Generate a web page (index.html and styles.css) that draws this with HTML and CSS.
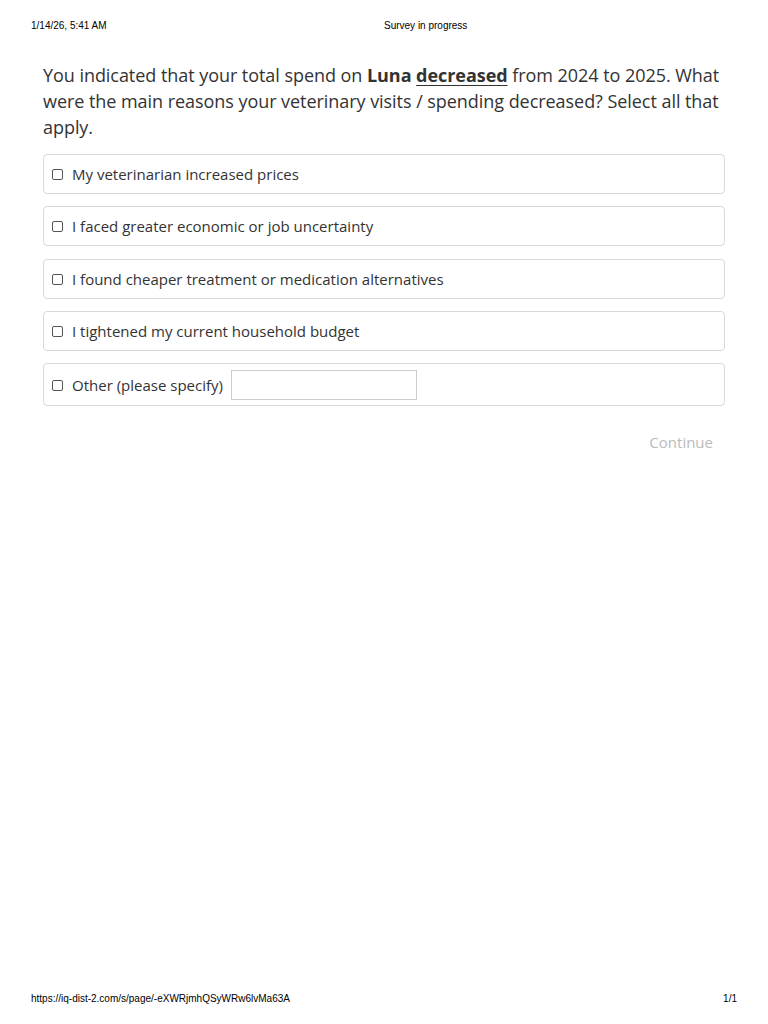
FILE: index.html
```html
<!DOCTYPE html>
<html>
<head>
<meta charset="utf-8">
<link rel="stylesheet" href="styles.css">
</head>
<body>
<div class="page">
  <header class="print-head">
    <span class="ph-date">1/14/26, 5:41 AM</span>
    <span class="ph-title">Survey in progress</span>
  </header>
  <main class="survey">
    <p class="question">You indicated that your total spend on <b>Luna</b> <b class="u">decreased</b> from 2024 to 2025. What were the main reasons your veterinary visits / spending decreased? Select all that apply.</p>
    <div class="options">
      <label class="opt"><span class="cb"></span><span>My veterinarian increased prices</span></label>
      <label class="opt"><span class="cb"></span><span>I faced greater economic or job uncertainty</span></label>
      <label class="opt"><span class="cb"></span><span>I found cheaper treatment or medication alternatives</span></label>
      <label class="opt"><span class="cb"></span><span>I tightened my current household budget</span></label>
      <label class="opt opt-other"><span class="cb"></span><span>Other (please specify)</span><span class="txt"></span></label>
    </div>
    <div class="actions"><span class="continue">Continue</span></div>
  </main>
  <footer class="print-foot">
    <span>https://iq-dist-2.com/s/page/-eXWRjmhQSyWRw6lvMa63A</span>
    <span>1/1</span>
  </footer>
</div>
</body>
</html>
```

FILE: styles.css
```css
html, body {
  margin: 0;
  padding: 0;
  background: #fff;
}
.page {
  width: 768px;
  height: 1024px;
  display: flex;
  flex-direction: column;
  box-sizing: border-box;
}
.print-head, .print-foot {
  font-family: "Liberation Sans", Arial, sans-serif;
  font-size: 10px;
  line-height: 12px;
  color: #000;
  display: flex;
  padding: 0 31px;
}
.print-head {
  padding-top: 20px;
}
.ph-date {
  width: 353px;
}
.print-foot {
  margin-top: auto;
  justify-content: space-between;
  padding-bottom: 19px;
}
.survey {
  padding: 0 43px;
  font-family: "Open Sans", sans-serif;
  color: #333;
}
.question {
  margin: 30px 0 0;
  font-size: 18px;
  line-height: 26px;
  letter-spacing: -0.05px;
}
.question b {
  font-weight: 700;
}
.question .u {
  text-decoration: underline;
  text-underline-offset: 3px;
}
.options {
  margin-top: 14px;
  display: flex;
  flex-direction: column;
  gap: 12.25px;
}
.opt {
  display: flex;
  align-items: center;
  gap: 9px;
  border: 1px solid #d9d9d9;
  border-radius: 4px;
  padding: 0 8px;
  height: 40px;
  box-sizing: border-box;
  font-size: 15px;
  color: #333;
}
.opt-other {
  height: 43px;
}
.cb {
  width: 9px;
  height: 9px;
  border: 1px solid #555;
  border-radius: 2px;
  flex: none;
  margin-top: 1px;
}
.txt {
  width: 184px;
  height: 28px;
  border: 1px solid #ccc;
  margin-left: -1px;
}
.actions {
  display: flex;
  justify-content: flex-end;
  padding: 26px 12px 0 0;
}
.continue {
  font-size: 15px;
  color: #bbb;
}
```
